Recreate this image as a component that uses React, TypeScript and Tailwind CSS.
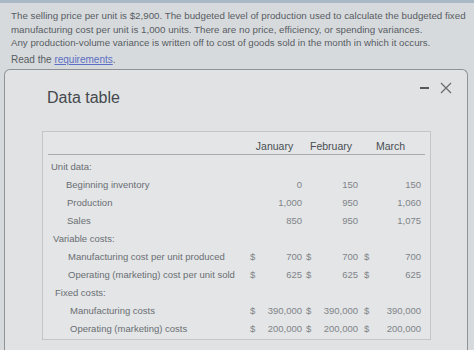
import React from "react";

const rows: Array<
  | { kind: "section"; label: string; pl: string }
  | { kind: "row"; label: string; pl: string; dollar: boolean; v: [string, string, string] }
> = [
  { kind: "section", label: "Unit data:", pl: "pl-[3px]" },
  { kind: "row", label: "Beginning inventory", pl: "pl-[18px]", dollar: false, v: ["0", "150", "150"] },
  { kind: "row", label: "Production", pl: "pl-[19px]", dollar: false, v: ["1,000", "950", "1,060"] },
  { kind: "row", label: "Sales", pl: "pl-[19px]", dollar: false, v: ["850", "950", "1,075"] },
  { kind: "section", label: "Variable costs:", pl: "pl-[5px]" },
  { kind: "row", label: "Manufacturing cost per unit produced", pl: "pl-[20px]", dollar: true, v: ["700", "700", "700"] },
  { kind: "row", label: "Operating (marketing) cost per unit sold", pl: "pl-[20px]", dollar: true, v: ["625", "625", "625"] },
  { kind: "section", label: "Fixed costs:", pl: "pl-[7px]" },
  { kind: "row", label: "Manufacturing costs", pl: "pl-[22px]", dollar: true, v: ["390,000", "390,000", "390,000"] },
  { kind: "row", label: "Operating (marketing) costs", pl: "pl-[22px]", dollar: true, v: ["200,000", "200,000", "200,000"] },
];

export default function App() {
  return (
    <div
      className="w-[474px] h-[350px] overflow-hidden bg-[#d7dadd] flex flex-col"
      style={{ fontFamily: '"Liberation Sans", Arial, sans-serif' }}
    >
      <div className="h-[3px] bg-[#a9b8c6] shrink-0" />
      <div className="pl-[11px] pt-[6px] text-[9.75px] leading-[13.5px] text-[#585d63] whitespace-nowrap">
        <p>
          The selling price per unit is $2,900. The budgeted level of production used to calculate the budgeted fixed
          <br />
          manufacturing cost per unit is 1,000 units. There are no price, efficiency, or spending variances.
        </p>
        <p className="text-[9.7px]">
          Any production-volume variance is written off to cost of goods sold in the month in which it occurs.
        </p>
        <p className="mt-[3px] text-[10px]">
          Read the <span className="text-[#5b6fc4] underline">requirements</span>.
        </p>
      </div>
      <div className="ml-[4px] mr-[6px] mt-[3px] flex-1 border border-b-0 border-[#8f9295] rounded-t-[6px] bg-[#e0e2e4] flex flex-col">
        <div className="flex justify-between">
          <div className="pl-[42px] pt-[18px] text-[16px] leading-[20px] text-[#45494d]">Data table</div>
          <div className="flex items-center gap-[11px] pr-[15px] pt-[8px] h-[28px] text-[#5c6064]">
            <div className="w-[9px] h-[2px] bg-[#55595d]" />
            <svg width="12" height="12" viewBox="0 0 12 12">
              <path d="M1 1 L11 11 M11 1 L1 11" stroke="#6a6e72" strokeWidth="1.3" fill="none" />
            </svg>
          </div>
        </div>
        <div className="ml-[37px] mt-[23px] w-[389px] h-[209px] border border-[#c3c6c9] bg-[#e3e5e7] px-[5px]">
          <div className="flex items-end border-b border-[#a8abae] pt-[7px] pb-[1px] text-[10.5px] leading-[14px] text-[#4a4e52]">
            <div className="w-[199px]" />
            <div className="w-[55px] text-center">January</div>
            <div className="w-[58px] text-center">February</div>
            <div className="w-[61px] text-center">March</div>
          </div>
          <div className="pt-[3px] text-[9.5px]">
            {rows.map((r, i) =>
              r.kind === "section" ? (
                <div key={i} className={`h-[18px] flex items-center text-[#6a6e72] ${r.pl}`}>
                  {r.label}
                </div>
              ) : (
                <div key={i} className="h-[18px] flex items-center">
                  <div className={`w-[199px] text-[#6a6e72] ${r.pl}`}>{r.label}</div>
                  <div className="w-[55px] flex justify-between text-[#818488]">
                    <span className="pl-[3px]">{r.dollar ? "$" : ""}</span>
                    <span>{r.v[0]}</span>
                  </div>
                  <div className="w-[58px] flex justify-between text-[#818488]">
                    <span className="pl-[4px]">{r.dollar ? "$" : ""}</span>
                    <span className="pr-[2px]">{r.v[1]}</span>
                  </div>
                  <div className="w-[61px] flex justify-between text-[#818488]">
                    <span className="pl-[4px]">{r.dollar ? "$" : ""}</span>
                    <span>{r.v[2]}</span>
                  </div>
                </div>
              )
            )}
          </div>
        </div>
      </div>
    </div>
  );
}
